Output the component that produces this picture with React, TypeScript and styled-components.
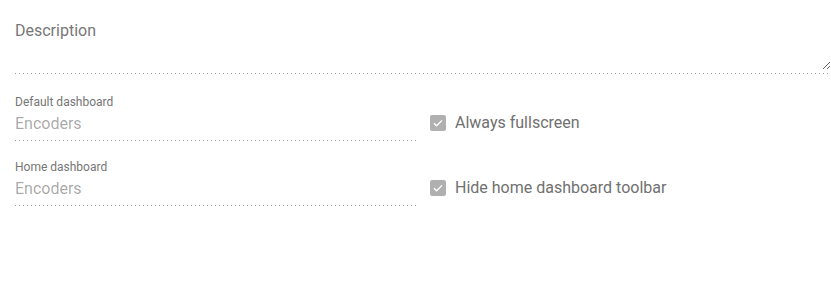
import React from "react";
import styled, { createGlobalStyle } from "styled-components";

const Global = createGlobalStyle`
  html, body { margin: 0; padding: 0; background: #fff; }
  body { font-family: Roboto, "Noto Sans", sans-serif; }
`;

const dotted = `
  background-image: linear-gradient(to right, rgba(0,0,0,0.38) 0%, rgba(0,0,0,0.38) 33%, transparent 0%);
  background-size: 4px 1px;
  background-repeat: repeat-x;
  background-position: 0 100%;
`;

const Page = styled.div`
  padding: 16px 0 0 15px;
  width: 831px;
  box-sizing: border-box;
`;

const TextAreaWrap = styled.div`
  padding-bottom: 4px;
  ${dotted}
  margin-bottom: 20px;
`;

const TextArea = styled.textarea`
  display: block;
  width: 100%;
  height: 54px;
  box-sizing: border-box;
  border: none;
  outline: none;
  background: transparent;
  resize: vertical;
  padding: 5px 0 0 0;
  margin: 0;
  font-family: Roboto, sans-serif;
  font-size: 16px;
  line-height: 20px;
  color: rgba(0, 0, 0, 0.38);
  &::placeholder {
    color: #777;
  }
`;

const Row = styled.div`
  display: flex;
  align-items: flex-start;
  gap: 11px;
  margin-bottom: 18px;
`;

const Field = styled.div`
  width: 404px;
  display: flex;
  flex-direction: column;
  padding-bottom: 7px;
  ${dotted}
`;

const FieldLabel = styled.label`
  font-size: 12px;
  line-height: 15px;
  color: #767676;
  height: 15px;
  margin-top: 1px;
`;

const FieldValue = styled.div`
  font-size: 16px;
  line-height: 20px;
  height: 20px;
  margin-top: 4px;
  color: rgba(0, 0, 0, 0.36);
`;

const CheckRow = styled.div`
  display: flex;
  align-items: center;
  gap: 9px;
  margin-top: 19px;
  height: 20px;
`;

const Box = styled.span`
  width: 16px;
  height: 16px;
  border-radius: 2px;
  background: #b0b0b0;
  display: flex;
  align-items: center;
  justify-content: center;
  flex-shrink: 0;
`;

const CheckLabel = styled.span`
  font-size: 16px;
  line-height: 20px;
  color: #707070;
`;

const Checkbox: React.FC<{ label: string }> = ({ label }) => (
  <CheckRow>
    <Box>
      <svg width="16" height="16" viewBox="0 0 16 16">
        <path d="M4 8.2 L6.6 10.8 L12 5.4" fill="none" stroke="#fff" strokeWidth="1.3" />
      </svg>
    </Box>
    <CheckLabel>{label}</CheckLabel>
  </CheckRow>
);

const FormRow: React.FC<{ label: string; value: string; check: string }> = ({ label, value, check }) => (
  <Row>
    <Field>
      <FieldLabel>{label}</FieldLabel>
      <FieldValue>{value}</FieldValue>
    </Field>
    <Checkbox label={check} />
  </Row>
);

export default function App() {
  return (
    <Page>
      <Global />
      <TextAreaWrap>
        <TextArea placeholder="Description" disabled />
      </TextAreaWrap>
      <FormRow label="Default dashboard" value="Encoders" check="Always fullscreen" />
      <FormRow label="Home dashboard" value="Encoders" check="Hide home dashboard toolbar" />
    </Page>
  );
}
